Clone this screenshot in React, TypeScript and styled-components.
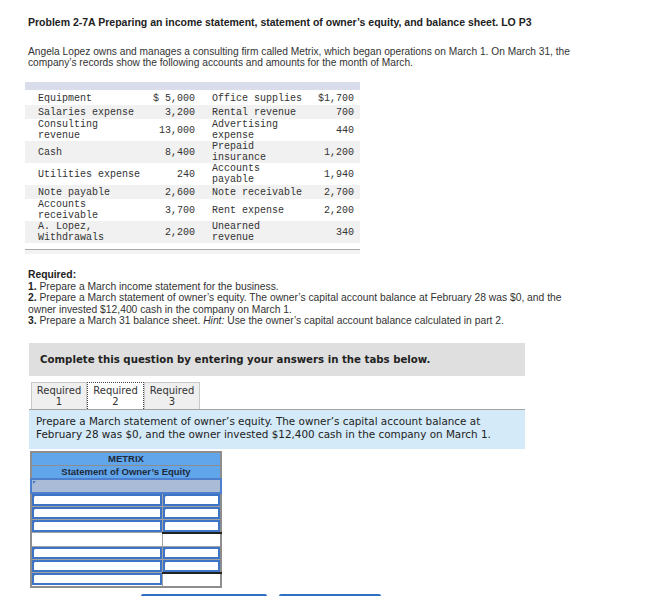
import React from "react";
import styled, {createGlobalStyle} from "styled-components";

const GlobalStyle = createGlobalStyle`
  body {
    margin: 0;
    background: #fff;
    font-family: "Liberation Sans", Arial, sans-serif;
  }
`

const Page = styled.div`
  width: 668px;
  height: 596px;
  overflow: hidden;
  padding-top: 16px;
  box-sizing: border-box;
`

const Title = styled.h1`
  margin: 0 0 0 28px;
  font-size: 10.5px;
  line-height: 13px;
  font-weight: bold;
  color: #222;
`

const Intro = styled.p`
  margin: 17px 0 0 28px;
  width: 550px;
  font-size: 10.2px;
  line-height: 11px;
  color: #333;
`

const AccountsWrap = styled.div`
  margin: 14px 0 0 25px;
  width: 335px;
`

const AccountsCap = styled.div`
  height: 8px;
  background: #d9dcea;
`

const Accounts = styled.table`
  width: 100%;
  margin-top: 1px;
  border-collapse: collapse;
  table-layout: fixed;
  font-family: "Liberation Mono", "Courier New", monospace;
  font-size: 10px;
  line-height: 11px;
  color: #333;

  tr:nth-child(even) td {
    background: #f1f1f1;
  }

  td {
    height: 14px;
    padding: 0;
    vertical-align: middle;
  }
`

const Label = styled.td<{ $side: 'left' | 'right' }>`
  && {
    padding: ${p => p.$side === 'left' ? '0 4px 0 13px' : '0 9px 0 13px'};
  }
`

const Amount = styled.td<{ $side: 'left' | 'right' }>`
  text-align: right;
  white-space: nowrap;

  && {
    padding-right: ${p => p.$side === 'left' ? '4px' : '6px'};
  }
`

const AccountsFoot = styled.div`
  margin-top: 6px;
  height: 4px;
  border-top: 1px solid #a9a9a9;
  background: #f3f3f3;
`

const Required = styled.div`
  margin: 15px 0 0 28px;
  width: 545px;
  font-size: 10.3px;
  line-height: 11.5px;
  color: #333;

  > p {
    margin: 0;
  }

  b {
    color: #222;
  }
`

const Prompt = styled.div`
  margin: 16px 0 0 29px;
  width: 496px;
  height: 33px;
  box-sizing: border-box;
  padding-left: 11px;
  display: flex;
  align-items: center;
  background: #dfdfdf;
  font-family: "DejaVu Sans", Verdana, sans-serif;
  font-size: 10.2px;
  font-weight: bold;
  color: #222;
`

const TabStrip = styled.div`
  margin: 6px 0 0 31px;
  display: flex;
  align-items: flex-end;
`

const Tab = styled.div<{ $active?: boolean; $w: number }>`
  width: ${p => p.$w}px;
  height: 27px;
  box-sizing: border-box;
  padding-top: 2px;
  text-align: center;
  font-family: "DejaVu Sans", Verdana, sans-serif;
  font-size: 10px;
  line-height: 11.5px;
  color: #333;
  background: ${p => p.$active ? '#fff' : '#efefef'};
  border: 1px ${p => p.$active ? 'dotted #444' : 'solid #c9c9c9'};
  border-bottom: none;
`

const Instruction = styled.div`
  margin-left: 29px;
  width: 496px;
  height: 40px;
  box-sizing: border-box;
  padding: 5px 7px 0;
  border-top: 1px solid #a3a3a3;
  background: #d4eaf8;
  font-family: "DejaVu Sans", Verdana, sans-serif;
  font-size: 10.4px;
  line-height: 13.5px;
  color: #222;
`

const Sheet = styled.table`
  margin: 2px 0 0 30px;
  width: 192px;
  border-collapse: collapse;
  table-layout: fixed;
  border: 2px solid #8d8d8d;

  td {
    height: 12px;
    padding: 0;
    border: 1px solid #a2a2a2;
  }
`

const SheetHead = styled.td`
  && {
    height: 12px;
    border-color: #8d8d8d;
  }
  background: #61a6ea;
  text-align: center;
  font-size: 9.5px;
  line-height: 12px;
  font-weight: bold;
  color: #1f2a3a;
`

const DateCell = styled.td`
  && {
    border: 2px solid #4d7fcc;
  }
  background: #aabbd7;
  position: relative;
`

const Cell = styled.td<{ $rule?: 'top' | 'bottom' }>`
  background: #fff;
  position: relative;

  && {
    ${p => p.$rule === 'top' ? 'border-top: 2px solid #222;' : ''}
    ${p => p.$rule === 'bottom' ? 'border-bottom: 2px solid #222;' : ''}
  }
`

const Entry = styled.div`
  height: 12px;
  box-sizing: border-box;
  border: 2px solid #3d74c6;
  background: #fff;
`

const Marker = styled.span`
  position: absolute;
  left: 1px;
  top: 1px;
  width: 0;
  height: 0;
  border-top: 3px solid #3d74c6;
  border-right: 3px solid transparent;
`

const NavRow = styled.div`
  margin: 6px 0 0 141px;
  display: flex;
  gap: 12px;
`

const NavButton = styled.div<{ $w: number }>`
  width: ${p => p.$w}px;
  height: 26px;
  background: #2e6fc0;
  border-radius: 2px;
  color: #fff;
  font-size: 11px;
  font-weight: bold;
  line-height: 26px;
  text-align: center;
`

type Account = [string, string, string, string]

const accounts: Account[] = [
    ["Equipment", "$ 5,000", "Office supplies", "$1,700"],
    ["Salaries expense", "3,200", "Rental revenue", "700"],
    ["Consulting revenue", "13,000", "Advertising expense", "440"],
    ["Cash", "8,400", "Prepaid insurance", "1,200"],
    ["Utilities expense", "240", "Accounts payable", "1,940"],
    ["Note payable", "2,600", "Note receivable", "2,700"],
    ["Accounts receivable", "3,700", "Rent expense", "2,200"],
    ["A. Lopez, Withdrawals", "2,200", "Unearned revenue", "340"],
]

type Kind = 'input' | 'plain'
type SheetRow = { left: Kind; right: Kind; rule?: 'top' | 'bottom' }

const sheetRows: SheetRow[] = [
    {left: 'input', right: 'input'},
    {left: 'input', right: 'input'},
    {left: 'input', right: 'input', rule: 'bottom'},
    {left: 'plain', right: 'plain'},
    {left: 'input', right: 'input'},
    {left: 'input', right: 'input'},
    {left: 'input', right: 'plain', rule: 'top'},
]

function SheetCell({kind, rule}: { kind: Kind, rule?: 'top' | 'bottom' }) {
    return (
        <Cell $rule={rule}>
            {kind === 'input' && <><Entry/><Marker/></>}
        </Cell>
    )
}

function App() {
    return (
        <Page>
            <GlobalStyle/>
            <Title>Problem 2-7A Preparing an income statement, statement of owner’s equity, and balance sheet. LO P3</Title>
            <Intro>
                Angela Lopez owns and manages a consulting firm called Metrix, which began operations on March 1. On
                March 31, the company’s records show the following accounts and amounts for the month of March.
            </Intro>

            <AccountsWrap>
                <AccountsCap/>
                <Accounts>
                    <colgroup>
                        <col style={{width: 120}}/>
                        <col style={{width: 54}}/>
                        <col style={{width: 115}}/>
                        <col style={{width: 46}}/>
                    </colgroup>
                    <tbody>
                    {accounts.map(([name1, amt1, name2, amt2]) => (
                        <tr key={name1}>
                            <Label $side="left">{name1}</Label>
                            <Amount $side="left">{amt1}</Amount>
                            <Label $side="right">{name2}</Label>
                            <Amount $side="right">{amt2}</Amount>
                        </tr>
                    ))}
                    </tbody>
                </Accounts>
                <AccountsFoot/>
            </AccountsWrap>

            <Required>
                <p><b>Required:</b></p>
                <p><b>1.</b> Prepare a March income statement for the business.</p>
                <p><b>2.</b> Prepare a March statement of owner’s equity. The owner’s capital account balance at
                    February 28 was $0, and the owner invested $12,400 cash in the company on March 1.</p>
                <p><b>3.</b> Prepare a March 31 balance sheet. <em>Hint:</em> Use the owner’s capital account balance
                    calculated in part 2.</p>
            </Required>

            <Prompt>Complete this question by entering your answers in the tabs below.</Prompt>

            <TabStrip>
                <Tab $w={56}>Required<br/>1</Tab>
                <Tab $w={57} $active>Required<br/>2</Tab>
                <Tab $w={56}>Required<br/>3</Tab>
            </TabStrip>
            <Instruction>
                Prepare a March statement of owner’s equity. The owner’s capital account balance at<br/>
                February 28 was $0, and the owner invested $12,400 cash in the company on March 1.
            </Instruction>

            <Sheet>
                <colgroup>
                    <col style={{width: 131}}/>
                    <col/>
                </colgroup>
                <tbody>
                <tr><SheetHead colSpan={2}>METRIX</SheetHead></tr>
                <tr><SheetHead colSpan={2}>Statement of Owner’s Equity</SheetHead></tr>
                <tr><DateCell colSpan={2}><Marker/></DateCell></tr>
                {sheetRows.map((row, i) => (
                    <tr key={i}>
                        <SheetCell kind={row.left}/>
                        <SheetCell kind={row.right} rule={row.rule}/>
                    </tr>
                ))}
                </tbody>
            </Sheet>

            <NavRow>
                <NavButton $w={126}>&lt; Required 1</NavButton>
                <NavButton $w={102}>Required 3 &gt;</NavButton>
            </NavRow>
        </Page>
    );
}

export default App;
